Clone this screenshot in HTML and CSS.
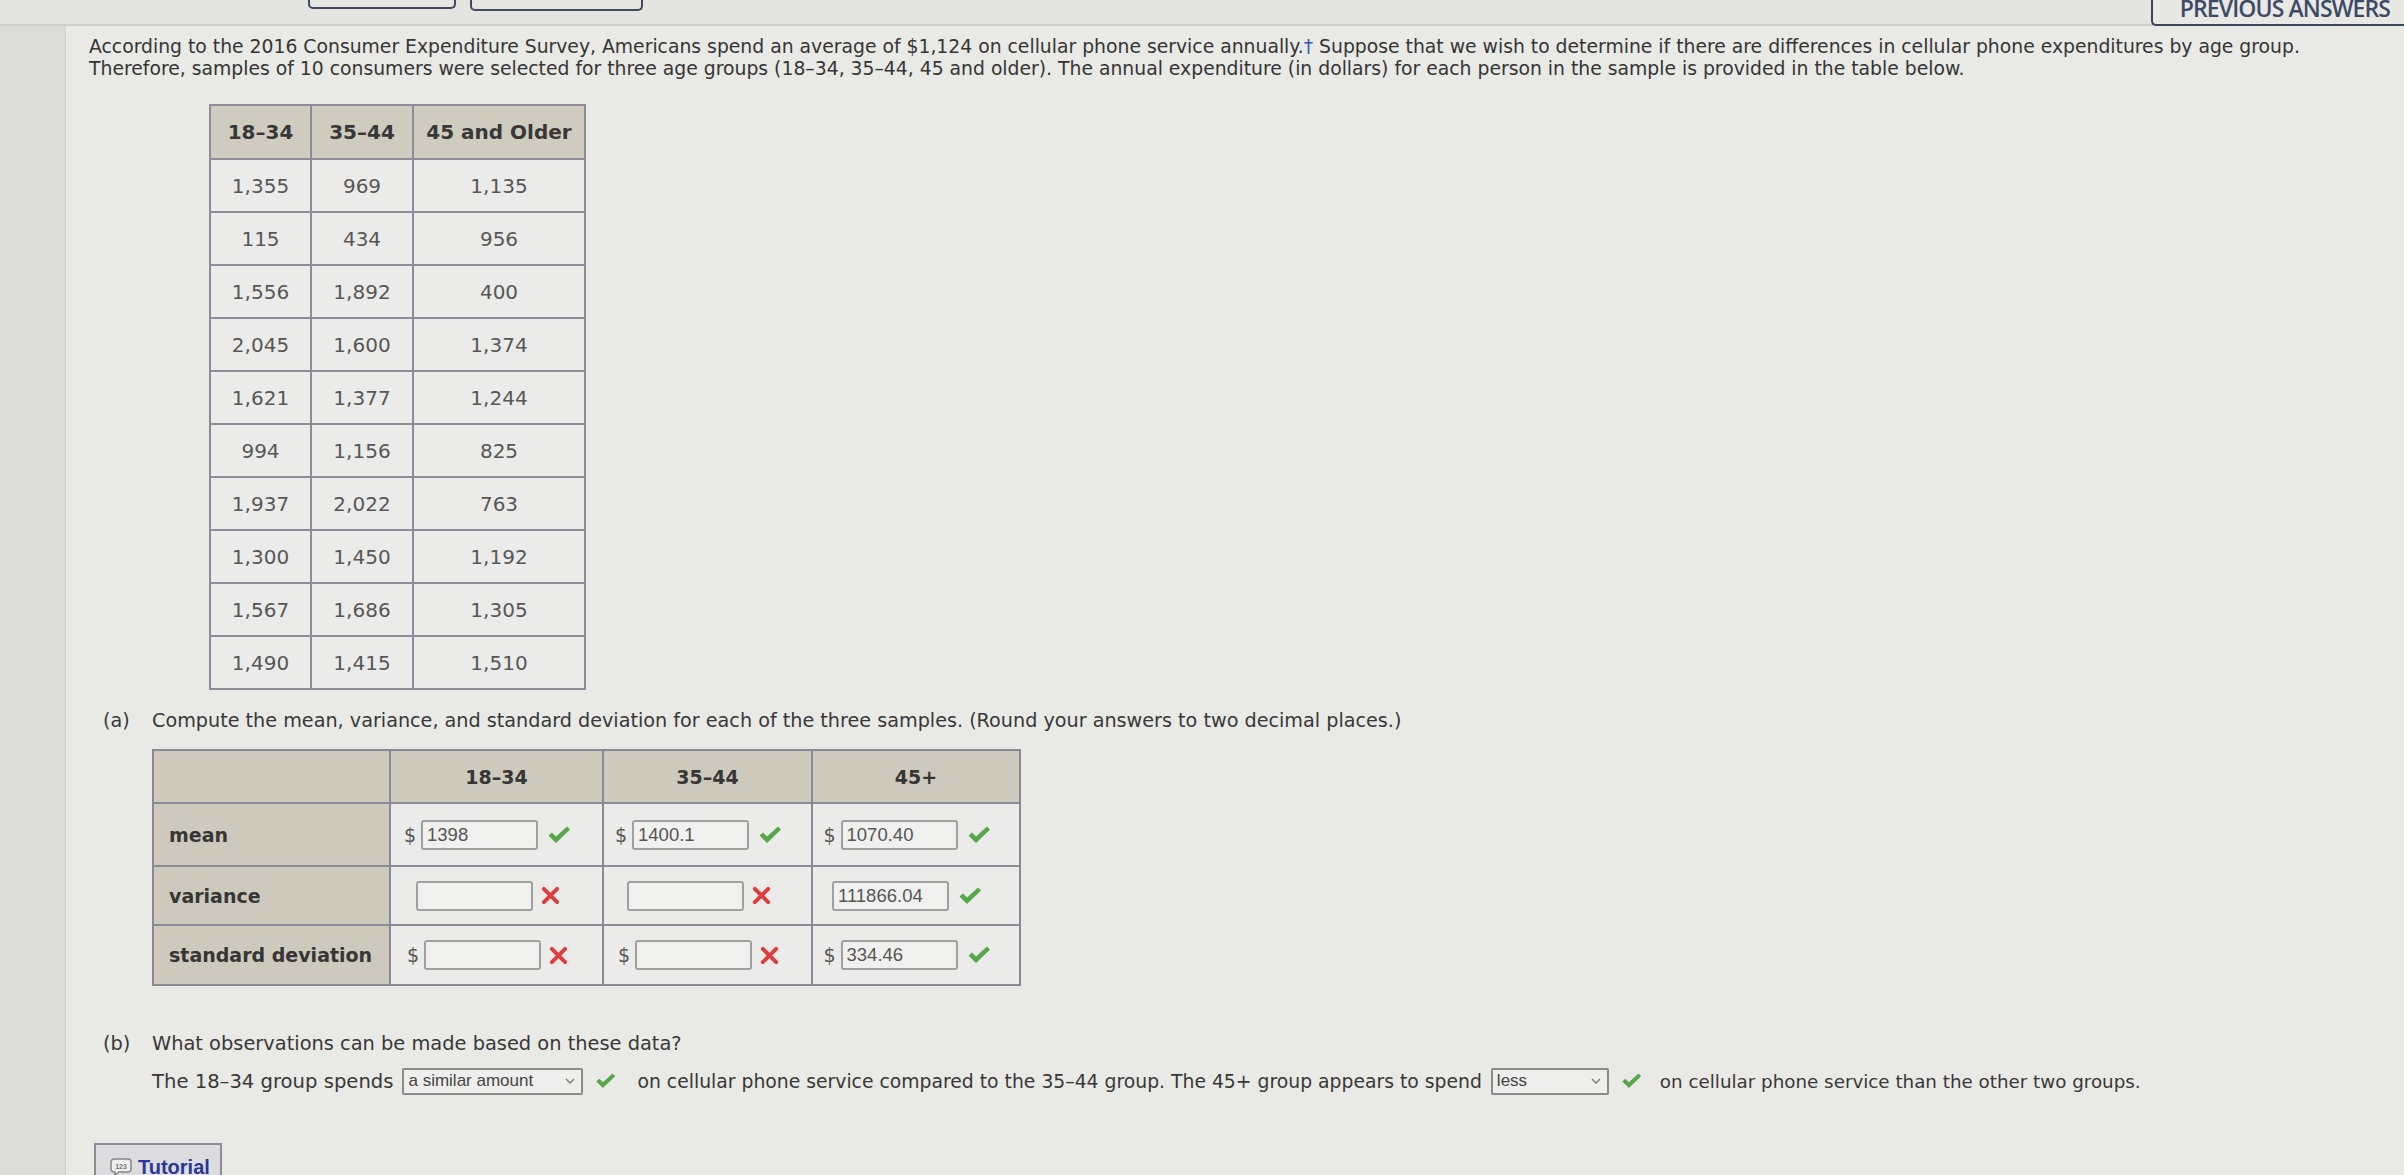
FILE: index.html
```html
<!DOCTYPE html>
<html>
<head>
<meta charset="utf-8">
<link rel="stylesheet" href="styles.css">
</head>
<body>
<div class="topbar">
  <div class="ghosts"><span class="ghost g1"></span><span class="ghost g2"></span></div>
  <div class="prev">PREVIOUS ANSWERS</div>
</div>
<div class="main">
  <div class="gutter"></div>
  <div class="panel">
    <p class="intro">According to the 2016 Consumer Expenditure Survey, Americans spend an average of $1,124 on cellular phone service annually.<span class="dagger">†</span> Suppose that we wish to determine if there are differences in cellular phone expenditures by age group.<br>Therefore, samples of 10 consumers were selected for three age groups (18–34, 35–44, 45 and older). The annual expenditure (in dollars) for each person in the sample is provided in the table below.</p>

    <table class="data">
      <tr><th class="c1">18–34</th><th class="c2">35–44</th><th class="c3">45 and Older</th></tr>
      <tr><td>1,355</td><td>969</td><td>1,135</td></tr>
      <tr><td>115</td><td>434</td><td>956</td></tr>
      <tr><td>1,556</td><td>1,892</td><td>400</td></tr>
      <tr><td>2,045</td><td>1,600</td><td>1,374</td></tr>
      <tr><td>1,621</td><td>1,377</td><td>1,244</td></tr>
      <tr><td>994</td><td>1,156</td><td>825</td></tr>
      <tr><td>1,937</td><td>2,022</td><td>763</td></tr>
      <tr><td>1,300</td><td>1,450</td><td>1,192</td></tr>
      <tr><td>1,567</td><td>1,686</td><td>1,305</td></tr>
      <tr><td>1,490</td><td>1,415</td><td>1,510</td></tr>
    </table>

    <div class="part parta"><span class="plabel">(a)</span><span>Compute the mean, variance, and standard deviation for each of the three samples. (Round your answers to two decimal places.)</span></div>

    <table class="stats">
      <tr class="head"><th class="lab"></th><th class="s1">18–34</th><th class="s2">35–44</th><th class="s3">45+</th></tr>
      <tr class="r-mean">
        <th class="lab">mean</th>
        <td><div class="ans"><span class="cur">$</span><span class="box">1398</span><svg class="ok" viewBox="0 0 24 20"><path d="M1.5 10.5 L5 7.5 L9 11.5 L20 1.5 L23 4.5 L9 18 Z"/></svg></div></td>
        <td><div class="ans"><span class="cur">$</span><span class="box">1400.1</span><svg class="ok" viewBox="0 0 24 20"><path d="M1.5 10.5 L5 7.5 L9 11.5 L20 1.5 L23 4.5 L9 18 Z"/></svg></div></td>
        <td><div class="ans"><span class="cur">$</span><span class="box">1070.40</span><svg class="ok" viewBox="0 0 24 20"><path d="M1.5 10.5 L5 7.5 L9 11.5 L20 1.5 L23 4.5 L9 18 Z"/></svg></div></td>
      </tr>
      <tr class="r-var">
        <th class="lab">variance</th>
        <td><div class="ans"><span class="box"></span><svg class="bad" viewBox="0 0 20 20"><path d="M3 3 L17 17 M17 3 L3 17"/></svg></div></td>
        <td><div class="ans"><span class="box"></span><svg class="bad" viewBox="0 0 20 20"><path d="M3 3 L17 17 M17 3 L3 17"/></svg></div></td>
        <td><div class="ans"><span class="box">111866.04</span><svg class="ok" viewBox="0 0 24 20"><path d="M1.5 10.5 L5 7.5 L9 11.5 L20 1.5 L23 4.5 L9 18 Z"/></svg></div></td>
      </tr>
      <tr class="r-sd">
        <th class="lab">standard deviation</th>
        <td><div class="ans"><span class="cur">$</span><span class="box"></span><svg class="bad" viewBox="0 0 20 20"><path d="M3 3 L17 17 M17 3 L3 17"/></svg></div></td>
        <td><div class="ans"><span class="cur">$</span><span class="box"></span><svg class="bad" viewBox="0 0 20 20"><path d="M3 3 L17 17 M17 3 L3 17"/></svg></div></td>
        <td><div class="ans"><span class="cur">$</span><span class="box">334.46</span><svg class="ok" viewBox="0 0 24 20"><path d="M1.5 10.5 L5 7.5 L9 11.5 L20 1.5 L23 4.5 L9 18 Z"/></svg></div></td>
      </tr>
    </table>

    <div class="part partb"><span class="plabel">(b)</span><span>What observations can be made based on these data?</span></div>

    <div class="sentence">
      <span class="t1">The 18–34 group spends</span>
      <span class="select sel1"><span>a similar amount</span><svg class="chev" viewBox="0 0 10 6"><path d="M1 1 L5 5 L9 1"/></svg></span>
      <svg class="ok ok-s" viewBox="0 0 24 20"><path d="M1.5 10.5 L5 7.5 L9 11.5 L20 1.5 L23 4.5 L9 18 Z"/></svg>
      <span class="t2">on cellular phone service compared to the 35–44 group. The 45+ group appears to spend</span>
      <span class="select sel2"><span>less</span><svg class="chev" viewBox="0 0 10 6"><path d="M1 1 L5 5 L9 1"/></svg></span>
      <svg class="ok ok-s" viewBox="0 0 24 20"><path d="M1.5 10.5 L5 7.5 L9 11.5 L20 1.5 L23 4.5 L9 18 Z"/></svg>
      <span class="t3">on cellular phone service than the other two groups.</span>
    </div>

    <div class="tutorial">
      <svg class="tut-ico" viewBox="0 0 22 18"><path class="bub" d="M4 1 H18 A3 3 0 0 1 21 4 V11 A3 3 0 0 1 18 14 H9 L5 17 V14 H4 A3 3 0 0 1 1 11 V4 A3 3 0 0 1 4 1 Z"/><text x="11" y="10.5" text-anchor="middle">123</text></svg>
      <span>Tutorial</span>
    </div>
  </div>
</div>
</body>
</html>
```

FILE: styles.css
```css
html, body {
  margin: 0;
  padding: 0;
}
body {
  width: 2404px;
  height: 1175px;
  overflow: hidden;
  background: #e9e9e6;
  font-family: "DejaVu Sans", Verdana, sans-serif;
  color: #3a3a3a;
}

/* top strip */
.topbar {
  height: 24px;
  display: flex;
  justify-content: space-between;
  align-items: flex-start;
  background: #e4e4e1;
  border-bottom: 2px solid #d0d0cc;
}
.ghosts {
  display: flex;
  align-items: flex-start;
}
.ghost {
  display: block;
  border: 2px solid #3f4a62;
  border-top: none;
  border-radius: 0 0 5px 5px;
  background: #e6e6e3;
}
.g1 {
  margin-left: 308px;
  width: 144px;
  height: 7px;
}
.g2 {
  margin-left: 14px;
  width: 169px;
  height: 9px;
}
.prev {
  width: 237px;
  height: 24px;
  border: 2px solid #3d4558;
  border-top: none;
  border-right: none;
  border-radius: 0 0 0 5px;
  background: #e8e8e5;
  font-family: "Open Sans", "DejaVu Sans", sans-serif;
  font-weight: 600;
  font-size: 23px;
  letter-spacing: -0.9px;
  line-height: 16px;
  color: #3d4a66;
  text-align: right;
  padding-right: 14px;
  overflow: hidden;
}

.main {
  display: flex;
  height: 1149px;
}
.gutter {
  width: 65px;
  background: #dbdbd8;
  border-right: 1px solid #d2d2cf;
}
.panel {
  flex: 1;
  padding-left: 23px;
}

.intro {
  margin: 10px 0 0 0;
  font-size: 18.8px;
  line-height: 22px;
  color: #353535;
  white-space: nowrap;
}
.dagger {
  color: #3a58b0;
}

/* data table */
.data {
  border-collapse: collapse;
  margin: 24px 0 0 120px;
  font-size: 20px;
  color: #575757;
}
.data th, .data td {
  border: 2px solid #8e8b98;
  text-align: center;
  padding: 0;
}
.data th {
  height: 52px;
  background: #cfcbbf;
  color: #383838;
  font-weight: bold;
}
.data td {
  height: 51px;
  background: #ebebe9;
}
.data .c1 { width: 99px; }
.data .c2 { width: 100px; }
.data .c3 { width: 170px; }

/* part headings */
.part {
  display: flex;
  line-height: 26px;
  color: #383838;
}
.plabel {
  width: 49px;
  margin-left: 14px;
}
.parta {
  margin-top: 18px;
  font-size: 19.2px;
}
.partb {
  margin-top: 45px;
  font-size: 19.4px;
}

/* stats table */
.stats {
  border-collapse: collapse;
  margin: 15px 0 0 63px;
}
.stats th, .stats td {
  border: 2px solid #8b8995;
  padding: 0;
}
.stats th {
  background: #cdc9bc;
  color: #363636;
  font-weight: bold;
}
.stats .head th {
  height: 51px;
  font-size: 19px;
  text-align: center;
}
.stats .lab {
  width: 220px;
  text-align: left;
  padding-left: 15px;
  font-size: 19px;
}
.stats .s1 { width: 211px; }
.stats .s2 { width: 207px; }
.stats .s3 { width: 206px; }
.stats td {
  background: #ebebe9;
  padding-right: 18px;
}
.r-mean th, .r-mean td { height: 61px; }
.r-var th, .r-var td { height: 57px; }
.r-sd th, .r-sd td { height: 58px; }

.ans {
  display: flex;
  align-items: center;
  justify-content: center;
}
.cur {
  font-size: 19px;
  color: #555;
  margin-right: 5px;
}
.box {
  display: block;
  box-sizing: border-box;
  width: 117px;
  height: 30px;
  border: 2px solid #a0a0a0;
  border-radius: 3px;
  background: #f0f0ee;
  font-family: "Liberation Sans", Arial, sans-serif;
  font-size: 18.5px;
  line-height: 26px;
  color: #555;
  padding-left: 4px;
}
.ok {
  width: 24px;
  height: 20px;
  margin-left: 9px;
  fill: #56a64a;
}
.bad {
  width: 19px;
  height: 19px;
  margin-left: 8px;
  stroke: #dd3d3d;
  stroke-width: 4.2;
  stroke-linecap: round;
  fill: none;
}

/* sentence with selects */
.sentence {
  display: flex;
  align-items: center;
  margin: 6px 0 0 63px;
  height: 36px;
  color: #383838;
  white-space: nowrap;
}
.t1 { font-size: 19.6px; }
.t2 { font-size: 18.8px; margin-left: 21px; }
.t3 { font-size: 18.3px; margin-left: 18px; }
.select {
  box-sizing: border-box;
  display: flex;
  align-items: center;
  justify-content: space-between;
  height: 27px;
  border: 2px solid #8a8a8a;
  border-radius: 2px;
  background: #eeeeec;
  font-family: "Liberation Sans", Arial, sans-serif;
  font-size: 17px;
  color: #444;
  padding: 0 6px 0 4px;
}
.sel1 {
  width: 181px;
  margin-left: 9px;
}
.sel2 {
  width: 118px;
  margin-left: 9px;
}
.chev {
  width: 10px;
  height: 6px;
  stroke: #777;
  stroke-width: 1.3;
  fill: none;
}
.ok-s {
  width: 21px;
  height: 18px;
  margin-left: 12px;
}

/* tutorial */
.tutorial {
  box-sizing: border-box;
  display: flex;
  align-items: center;
  width: 128px;
  height: 48px;
  margin: 44px 0 0 5px;
  border: 2px solid #8c8c98;
  background: #dcdcdf;
  padding: 0 0 0 14px;
  font-family: "Liberation Sans", Arial, sans-serif;
  font-weight: bold;
  font-size: 20px;
  color: #2b3896;
}
.tut-ico {
  width: 22px;
  height: 18px;
  margin-right: 6px;
}
.tut-ico .bub {
  fill: #eeeeee;
  stroke: #888;
  stroke-width: 1.5;
}
.tut-ico text {
  font-family: "Liberation Sans", Arial, sans-serif;
  font-size: 7px;
  font-weight: bold;
  fill: #777;
}
```
